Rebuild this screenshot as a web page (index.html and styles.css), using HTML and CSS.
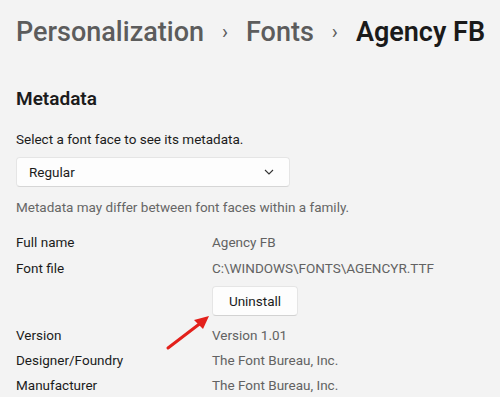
FILE: index.html
```html
<!DOCTYPE html>
<html lang="en">
<head>
  <meta charset="UTF-8">
  <title>Fonts - Agency FB</title>
  <link rel="stylesheet" href="styles.css">
</head>
<body>

  <div class="page">
    <!-- Fil d'ariane -->
    <div class="breadcrumb">
      <span class="crumb">Personalization</span>
      <span class="sep">&rsaquo;</span>
      <span class="crumb">Fonts</span>
      <span class="sep">&rsaquo;</span>
      <span class="crumb current">Agency FB</span>
    </div>

    <h2>Metadata</h2>

    <p class="hint">Select a font face to see its metadata.</p>
    <div class="select">
      <span>Regular</span>
      <svg width="12" height="8" viewBox="0 0 12 8"><path d="M2 2l4 4 4-4" fill="none" stroke="#333" stroke-width="1.1"/></svg>
    </div>
    <p class="note">Metadata may differ between font faces within a family.</p>

    <!-- Infos -->
    <div class="meta">
      <div class="row"><span class="label">Full name</span><span class="value">Agency FB</span></div>
      <div class="row"><span class="label">Font file</span><span class="value">C:\WINDOWS\FONTS\AGENCYR.TTF</span></div>
      <div class="row action">
        <span class="label"></span>
        <div class="value">
          <button>Uninstall</button>
          <svg class="arrow" width="50" height="42" viewBox="0 0 50 42">
            <path d="M4 38L38 12" stroke="#e3201b" stroke-width="3" stroke-linecap="round"/>
            <path d="M45 6L30 10L39 19Z" fill="#e3201b"/>
          </svg>
        </div>
      </div>
      <div class="row"><span class="label">Version</span><span class="value">Version 1.01</span></div>
      <div class="row"><span class="label">Designer/Foundry</span><span class="value">The Font Bureau, Inc.</span></div>
      <div class="row"><span class="label">Manufacturer</span><span class="value">The Font Bureau, Inc.</span></div>
    </div>
  </div>

</body>
</html>
```

FILE: styles.css
```css
body {
  margin: 0;
  background: #f3f3f3;
  font-family: Roboto, 'Noto Sans', sans-serif;
  color: #1b1b1b;
  overflow: hidden;
}

.page {
  padding: 14px 16px 0;
}

.breadcrumb {
  display: flex;
  align-items: center;
  gap: 18px;
  font-size: 27px;
  font-weight: 500;
  height: 36px;
  white-space: nowrap;
}

.crumb {
  color: #5c5c5c;
  flex-shrink: 0;
}

.crumb.current {
  color: #1a1a1a;
  font-weight: 600;
}

.sep {
  color: #5c5c5c;
  font-size: 20px;
  font-weight: 400;
}

h2 {
  font-size: 19px;
  font-weight: 600;
  margin: 37px 0 0;
}

.hint {
  font-size: 13.5px;
  margin: 21px 0 0;
}

.select {
  width: 246px;
  height: 28px;
  margin-top: 10px;
  padding: 0 14px 0 12px;
  display: flex;
  align-items: center;
  justify-content: space-between;
  background: #fdfdfd;
  border: 1px solid #e5e5e5;
  border-bottom-color: #d6d6d6;
  border-radius: 4px;
  font-size: 13.5px;
}

.note {
  font-size: 13.5px;
  color: #666;
  margin: 12px 0 0;
}

.meta {
  margin-top: 14px;
  font-size: 13.5px;
}

.row {
  display: flex;
  height: 25px;
  align-items: center;
}

.row:first-child {
  height: 26px;
}

.label {
  width: 196px;
  flex-shrink: 0;
}

.value {
  color: #626262;
}

.row.action {
  height: 42px;
}

.row.action .value {
  position: relative;
}

button {
  font-family: inherit;
  font-size: 13.5px;
  color: #1b1b1b;
  background: #fdfdfd;
  border: 1px solid #e5e5e5;
  border-bottom-color: #d2d2d2;
  border-radius: 4px;
  width: 86px;
  height: 30px;
}

.arrow {
  position: absolute;
  left: -48px;
  top: 24px;
}
```
